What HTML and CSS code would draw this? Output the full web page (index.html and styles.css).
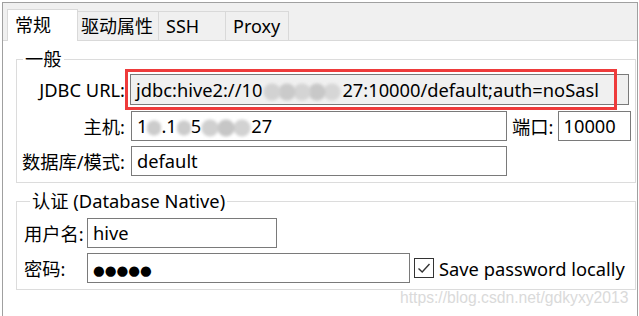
FILE: index.html
```html
<!DOCTYPE html>
<html lang="zh-CN">
<head>
<meta charset="utf-8">
<link rel="stylesheet" href="styles.css">
</head>
<body>
<div class="window">
  <div class="tabs">
    <div class="tab tab-active w1">常规</div>
    <div class="tab w2">驱动属性</div>
    <div class="tab w3">SSH</div>
    <div class="tab w4">Proxy</div>
  </div>
  <div class="panel">
    <fieldset class="group g1">
      <legend>一般</legend>
      <div class="row r1">
        <div class="lbl">JDBC URL:</div>
        <div class="field readonly f-url">jdbc:hive2://10<span class="blur b-url"></span>27:10000/default;auth=noSasl</div>
      </div>
      <div class="row r2">
        <div class="lbl">主机:</div>
        <div class="field f-host">1<span class="blur b-s"></span>.1<span class="blur b-s"></span>5<span class="blur b-l"></span>27</div>
        <div class="lbl-port">端口:</div>
        <div class="field f-port">10000</div>
      </div>
      <div class="row r3">
        <div class="lbl">数据库/模式:</div>
        <div class="field f-host">default</div>
      </div>
    </fieldset>
    <fieldset class="group g2">
      <legend>认证 (Database Native)</legend>
      <div class="row r4">
        <div class="lbl2">用户名:</div>
        <div class="field f-user">hive</div>
      </div>
      <div class="row r5">
        <div class="lbl2">密码:</div>
        <div class="field f-pass"><span class="dots">●●●●●</span></div>
        <div class="check"><svg width="18" height="18" viewBox="0 0 18 18"><path d="M3.5 9.5 L7.2 13 L14.5 5" fill="none" stroke="#333" stroke-width="1.4"/></svg></div>
        <div class="check-lbl">Save password locally</div>
      </div>
    </fieldset>
  </div>
  <div class="highlight"></div>
  <div class="watermark">https://blog.csdn.net/gdkyxy2013</div>
</div>
</body>
</html>
```
FILE: styles.css
```css
html, body {
  margin: 0;
  padding: 0;
  background: #ffffff;
}
body {
  width: 639px;
  height: 316px;
  overflow: hidden;
  font-family: "Noto Sans", "Noto Sans CJK SC", sans-serif;
  font-size: 18.3px;
  color: #000;
}
.window {
  position: relative;
  margin: 2px 0 0 2px;
  width: 634px;
  height: 314px;
  border-left: 1px solid #a0a0a0;
  border-top: 1px solid #a0a0a0;
  border-right: 1px solid #a0a0a0;
}
.tabs {
  display: flex;
  align-items: flex-end;
  height: 37px;
  background: #f0f0f0;
  border-bottom: 1px solid #d9d9d9;
  padding-left: 4px;
  font-size: 18px;
}
.tab {
  box-sizing: border-box;
  height: 29px;
  border-top: 1px solid #d9d9d9;
  border-right: 1px solid #d9d9d9;
  background: #f0f0f0;
  display: flex;
  align-items: center;
  padding-left: 7px;
  line-height: 20px;
  white-space: nowrap;
}
.tab-active {
  height: 32px;
  margin-bottom: -1px;
  background: #ffffff;
  border-left: 1px solid #d9d9d9;
  padding-left: 7px;
  padding-bottom: 1px;
}
.w1 { width: 71px; }
.w2 { width: 81px; padding-left: 3px; }
.w3 { width: 67px; }
.w4 { width: 63px; }
.panel {
  padding: 8px 1px 0 13px;
}
.group {
  margin: 0;
  padding: 5px 0 6px 0;
  border: 1px solid #dcdcdc;
  min-width: 0;
}
.group legend {
  margin-left: 6px;
  padding: 0 2px;
  line-height: 20px;
  height: 20px;
  white-space: nowrap;
}
.g2 {
  margin-top: 8px;
  padding: 7px 0 6px 7px;
}
.row {
  display: flex;
  align-items: center;
}
.r2 { margin-top: 6px; }
.r3 { margin-top: 5px; }
.r5 { margin-top: 5px; }
.lbl {
  width: 108px;
  text-align: right;
  margin-right: 6px;
  white-space: nowrap;
}
.r1 .lbl { margin-right: 5px; }
.lbl2 {
  width: 63px;
  white-space: nowrap;
}
.field {
  box-sizing: border-box;
  height: 30px;
  border: 1px solid #7a7a7a;
  background: #ffffff;
  padding-left: 5px;
  line-height: 28px;
  white-space: nowrap;
  overflow: hidden;
}
.readonly { background: #f0f0f0; }
.f-url { width: 499px; height: 31px; line-height: 29px; }
.f-host { width: 376px; }
.f-port { width: 73px; padding-left: 4px; }
.lbl-port { margin: 0 5px 0 5px; white-space: nowrap; }
.f-user { width: 190px; }
.f-pass { width: 323px; }
.blur {
  display: inline-block;
  height: 24px;
  vertical-align: middle;
  filter: blur(1.5px);
}
.b-url {
  width: 80px;
  background:
    radial-gradient(circle at 10px 12px, #d2d2d2 8px, transparent 9px),
    radial-gradient(circle at 25px 12px, #cacaca 8px, transparent 9px),
    radial-gradient(circle at 40px 12px, #d4d4d4 8px, transparent 9px),
    radial-gradient(circle at 55px 12px, #c8c8c8 8px, transparent 9px),
    radial-gradient(circle at 70px 12px, #d6d6d6 8px, transparent 9px);
}
.b-s {
  width: 14px;
  background: radial-gradient(circle at 7px 12px, #cccccc 7px, transparent 8px);
}
.b-l {
  width: 50px;
  background:
    radial-gradient(circle at 9px 12px, #d0d0d0 8px, transparent 9px),
    radial-gradient(circle at 25px 12px, #c6c6c6 8px, transparent 9px),
    radial-gradient(circle at 41px 12px, #d2d2d2 8px, transparent 9px);
}
.dots {
  font-family: "DejaVu Sans", sans-serif;
  font-size: 13.5px;
  letter-spacing: 0px;
}
.check {
  box-sizing: border-box;
  width: 20px;
  height: 20px;
  margin-left: 4px;
  border: 1px solid #333333;
  background: #fff;
  display: flex;
  align-items: center;
  justify-content: center;
}
.check-lbl {
  margin-left: 5px;
  white-space: nowrap;
}
.highlight {
  position: absolute;
  left: 122px;
  top: 66px;
  width: 486px;
  height: 35px;
  border: 3px solid #ee3b3b;
}
.watermark {
  position: absolute;
  left: 397px;
  top: 286px;
  font-family: "Liberation Sans", Arial, sans-serif;
  font-size: 15.7px;
  color: #dadada;
  white-space: nowrap;
}
```
